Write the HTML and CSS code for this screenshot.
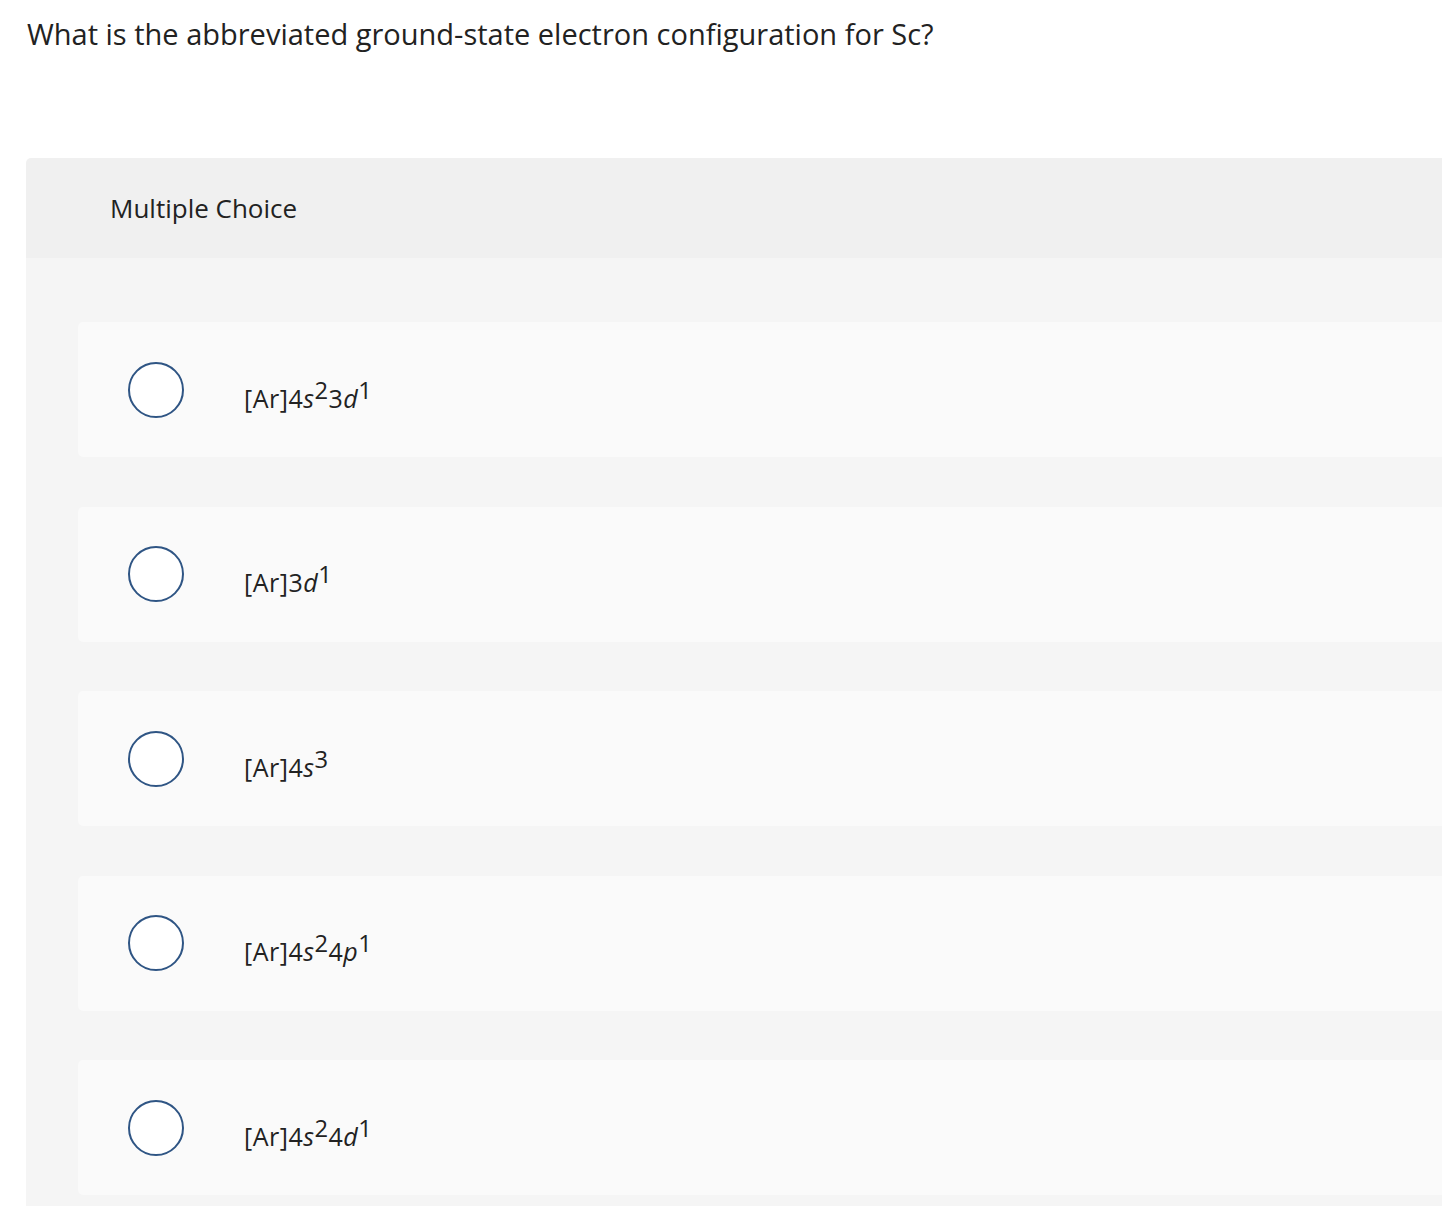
FILE: index.html
```html
<!DOCTYPE html>
<html>
<head>
<meta charset="utf-8">
<link rel="stylesheet" href="styles.css">
</head>
<body>
<div class="page">
  <p class="question">What is the abbreviated ground-state electron configuration for Sc?</p>
  <section class="panel">
    <div class="panel-head">Multiple Choice</div>
    <div class="panel-body">
      <div class="option"><span class="radio"></span><span class="answer">[Ar]4<i>s</i><sup>2</sup>3<i>d</i><sup>1</sup></span></div>
      <div class="option"><span class="radio"></span><span class="answer">[Ar]3<i>d</i><sup>1</sup></span></div>
      <div class="option"><span class="radio"></span><span class="answer">[Ar]4<i>s</i><sup>3</sup></span></div>
      <div class="option"><span class="radio"></span><span class="answer">[Ar]4<i>s</i><sup>2</sup>4<i>p</i><sup>1</sup></span></div>
      <div class="option"><span class="radio"></span><span class="answer">[Ar]4<i>s</i><sup>2</sup>4<i>d</i><sup>1</sup></span></div>
    </div>
  </section>
</div>
</body>
</html>
```

FILE: styles.css
```css
html, body {
  margin: 0;
  padding: 0;
  background: #ffffff;
}
body {
  font-family: "Open Sans", Lato, sans-serif;
  color: #222222;
  overflow: hidden;
}
.page {
  padding-left: 26px;
}
.question {
  margin: 0;
  padding: 14px 0 0 1px;
  font-size: 29px;
  line-height: 40px;
  height: 158px;
  box-sizing: border-box;
}
.panel {
  width: 1460px;
  border-top-left-radius: 5px;
  overflow: hidden;
}
.panel-head {
  background: #f0f0f0;
  height: 100px;
  box-sizing: border-box;
  padding-left: 84px;
  display: flex;
  align-items: center;
  font-size: 26px;
}
.panel-body {
  background: #f5f5f5;
  padding: 64px 0 60px 52px;
  display: flex;
  flex-direction: column;
  gap: 49.5px;
}
.option {
  background: #fafafa;
  height: 135px;
  border-radius: 5px;
  display: flex;
  align-items: center;
  padding-left: 50px;
}
.radio {
  width: 52px;
  height: 52px;
  border: 2px solid #2f5584;
  border-radius: 50%;
  background: #ffffff;
  flex: none;
}
.answer {
  margin-left: 60px;
  font-size: 25px;
  letter-spacing: 0.5px;
  padding-top: 16px;
}
.answer i {
  font-style: italic;
}
.answer sup {
  font-size: 0.95em;
  line-height: 0;
  vertical-align: 0.36em;
}
```
